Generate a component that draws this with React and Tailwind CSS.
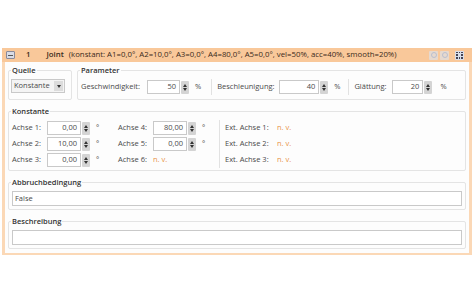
import React from 'react';

const FONT = { fontFamily: '"Open Sans", "Noto Sans", sans-serif' };

function Spinner() {
  return (
    <div className="flex h-[13px] w-[8px] flex-col items-center justify-center gap-[1px] rounded-[1px] bg-[#d4d4d4]">
      <div className="h-0 w-0 border-x-[2.5px] border-b-[3px] border-x-transparent border-b-[#333]" />
      <div className="h-0 w-0 border-x-[2.5px] border-t-[3px] border-x-transparent border-t-[#333]" />
    </div>
  );
}

function NumField({ value, width }) {
  return (
    <div className="flex items-center gap-[1px]">
      <div className={`flex h-[14px] items-center justify-end border border-[#c9c9c9] bg-white pr-[3px] ${width}`}>
        {value}
      </div>
      <Spinner />
    </div>
  );
}

function Group({ title, className = '', children }) {
  return (
    <div className={`relative rounded-[2px] border border-[#e4e4e4] ${className}`}>
      <span className="absolute left-[2px] top-[-6px] bg-[#fdfdfd] px-[1px] text-[7.5px] font-semibold leading-[10px] text-[#333]">
        {title}
      </span>
      {children}
    </div>
  );
}

function Axis({ label, value, w = 'w-[34px]' }) {
  return (
    <div className="flex h-[16px] items-center">
      <span className="w-[35px]">{label}</span>
      {value === null ? (
        <span className="text-[#e8944a]">n. v.</span>
      ) : (
        <>
          <NumField value={value} width={w} />
          <span className="ml-[6px]">°</span>
        </>
      )}
    </div>
  );
}

export default function App() {
  return (
    <div className="h-[304px] w-[474px] bg-white pt-[48px] text-[7.5px] leading-none text-[#4a4a4a]" style={FONT}>
      <div className="mx-[2px] border-x-[3px] border-b-[2px] border-[#fbd8b6]">
        {/* Title bar */}
        <div className="-mx-[3px] flex h-[14px] items-center bg-[#f9c89a] pl-[4px] pr-[8px] text-[7.8px] text-[#3a2a1a]">
          <div className="flex h-[8px] w-[9px] items-center justify-center rounded-[1px] border border-[#8a8a9a] bg-[#d8dbe6]">
            <div className="h-[1px] w-[5px] bg-[#555]" />
          </div>
          <span className="ml-[11px] font-semibold">1</span>
          <span className="ml-[16px] font-semibold">Joint</span>
          <span className="ml-[5px]">(konstant: A1=0,0°, A2=10,0°, A3=0,0°, A4=80,0°, A5=0,0°, vel=50%, acc=40%, smooth=20%)</span>
          <div className="ml-auto flex items-center gap-[2px]">
            <div className="h-[9px] w-[9px] rounded-[1px] bg-[#e6d9cf] p-[1.5px]">
              <div className="h-full w-full rounded-full border border-[#b9bfd0]" />
            </div>
            <div className="h-[9px] w-[9px] rounded-[1px] bg-[#e6d9cf] p-[1.5px]">
              <div className="h-full w-full rounded-full border border-[#b9bfd0]" />
            </div>
            <div className="ml-[4px] grid h-[9px] w-[9px] grid-cols-3 gap-[1px] rounded-[1px] bg-[#d8dde8] p-[1px]">
              {Array.from({ length: 9 }).map((_, i) => (
                <div key={i} className={i === 4 ? 'bg-transparent' : 'bg-[#445]'} />
              ))}
            </div>
          </div>
        </div>

        {/* Body */}
        <div className="flex flex-col gap-[11px] bg-[#fdfdfd] px-[3px] pb-[4px] pt-[8px]">
          <div className="flex gap-[5px]">
            <Group title="Quelle" className="w-[64px] shrink-0">
              <div className="px-[2px] pb-[4px] pt-[8px]">
                <div className="flex h-[14px] w-[54px] items-center justify-between border border-[#c9c9c9] bg-[#f4f4f4] pl-[2px] pr-[1px]">
                  <span>Konstante</span>
                  <div className="flex h-[10px] w-[9px] items-center justify-center bg-[#dcdcdc]">
                    <div className="h-0 w-0 border-x-[2.5px] border-t-[3px] border-x-transparent border-t-[#333]" />
                  </div>
                </div>
              </div>
            </Group>
            <Group title="Parameter" className="flex-1">
              <div className="flex items-center px-[3px] pb-[4px] pt-[8px]">
                <span className="w-[66px]">Geschwindigkeit:</span>
                <NumField value="50" width="w-[33px]" />
                <span className="ml-[6px]">%</span>
                <div className="ml-[10px] mr-[5px] h-[16px] w-px bg-[#e2e2e2]" />
                <span className="w-[62px]">Beschleunigung:</span>
                <NumField value="40" width="w-[40px]" />
                <span className="ml-[6px]">%</span>
                <div className="ml-[8px] mr-[5px] h-[16px] w-px bg-[#e2e2e2]" />
                <span className="w-[38px]">Glättung:</span>
                <NumField value="20" width="w-[31px]" />
                <span className="ml-[8px]">%</span>
              </div>
            </Group>
          </div>

          <Group title="Konstante">
            <div className="flex px-[3px] pb-[2px] pt-[8px]">
              <div className="flex w-[106px] flex-col">
                <Axis label="Achse 1:" value="0,00" />
                <Axis label="Achse 2:" value="10,00" />
                <Axis label="Achse 3:" value="0,00" />
              </div>
              <div className="flex w-[101px] flex-col">
                <Axis label="Achse 4:" value="80,00" />
                <Axis label="Achse 5:" value="0,00" />
                <Axis label="Achse 6:" value={null} />
              </div>
              <div className="flex flex-1 flex-col border-l border-[#e2e2e2] pl-[5px]">
                {[1, 2, 3].map((n) => (
                  <div key={n} className="flex h-[16px] items-center">
                    <span className="w-[52px]">Ext. Achse {n}:</span>
                    <span className="text-[#e8944a]">n. v.</span>
                  </div>
                ))}
              </div>
            </div>
          </Group>

          <Group title="Abbruchbedingung">
            <div className="px-[3px] pb-[3px] pt-[8px]">
              <div className="flex h-[15px] items-center border border-[#c9c9c9] bg-white pl-[2px]">False</div>
            </div>
          </Group>

          <Group title="Beschreibung">
            <div className="px-[3px] pb-[3px] pt-[8px]">
              <div className="h-[15px] border border-[#c9c9c9] bg-white" />
            </div>
          </Group>
        </div>
      </div>
    </div>
  );
}
